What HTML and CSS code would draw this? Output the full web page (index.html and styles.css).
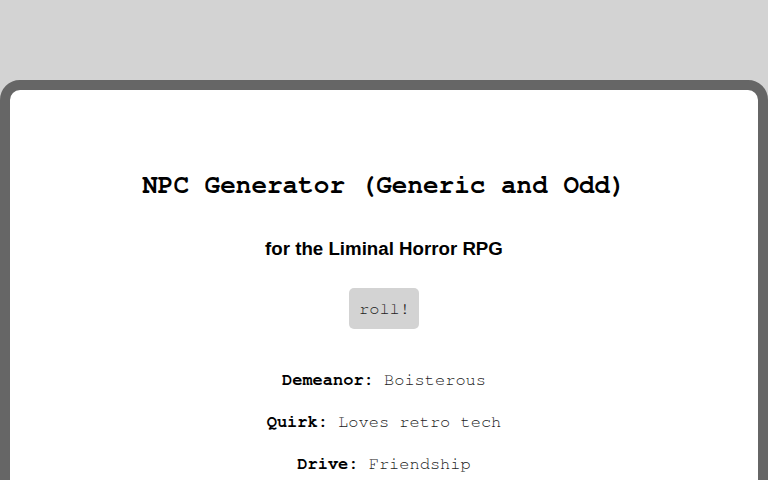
FILE: index.html
```html
<!DOCTYPE html>
<html>
<head>
<meta charset="utf-8">
<link rel="stylesheet" href="styles.css">
</head>
<body>
<main class="card">
  <h1 class="title">NPC Generator (Generic and Odd)</h1>
  <h2 class="subtitle">for the Liminal Horror RPG</h2>
  <button class="roll">roll!</button>
  <div class="results">
    <p class="row"><span class="label">Demeanor:</span> <span class="value">Boisterous</span></p>
    <p class="row"><span class="label">Quirk:</span> <span class="value">Loves retro tech</span></p>
    <p class="row"><span class="label">Drive:</span> <span class="value">Friendship</span></p>
  </div>
</main>
</body>
</html>
```
FILE: styles.css
```css
html, body {
  margin: 0;
  padding: 0;
  background: #d3d3d3;
}
body {
  padding-top: 80px;
  font-family: "FreeMono", "Liberation Mono", monospace;
  color: #000;
}
.card {
  background: #fff;
  border: 10px solid #666;
  border-radius: 20px;
  min-height: 600px;
  text-align: center;
  padding-top: 80px;
  display: flex;
  flex-direction: column;
  align-items: center;
}
.title {
  margin: 0;
  font-size: 26px;
  line-height: 30px;
  font-weight: bold;
}
.subtitle {
  margin: 38px 0 0;
  font-family: "Liberation Sans", Arial, sans-serif;
  font-size: 18.7px;
  line-height: 22px;
  font-weight: bold;
}
.roll {
  margin-top: 28px;
  font-family: "FreeMono", "Liberation Mono", monospace;
  font-size: 17px;
  color: #222;
  background: #d3d3d3;
  border: none;
  border-radius: 5px;
  padding: 0 10px;
  height: 41px;
  width: 70px;
}
.results {
  margin-top: 41px;
  display: flex;
  flex-direction: column;
  gap: 22px;
}
.row {
  margin: 0;
  font-size: 17px;
  line-height: 20px;
}
.label {
  font-weight: bold;
}
.value {
  color: #222;
}
```
